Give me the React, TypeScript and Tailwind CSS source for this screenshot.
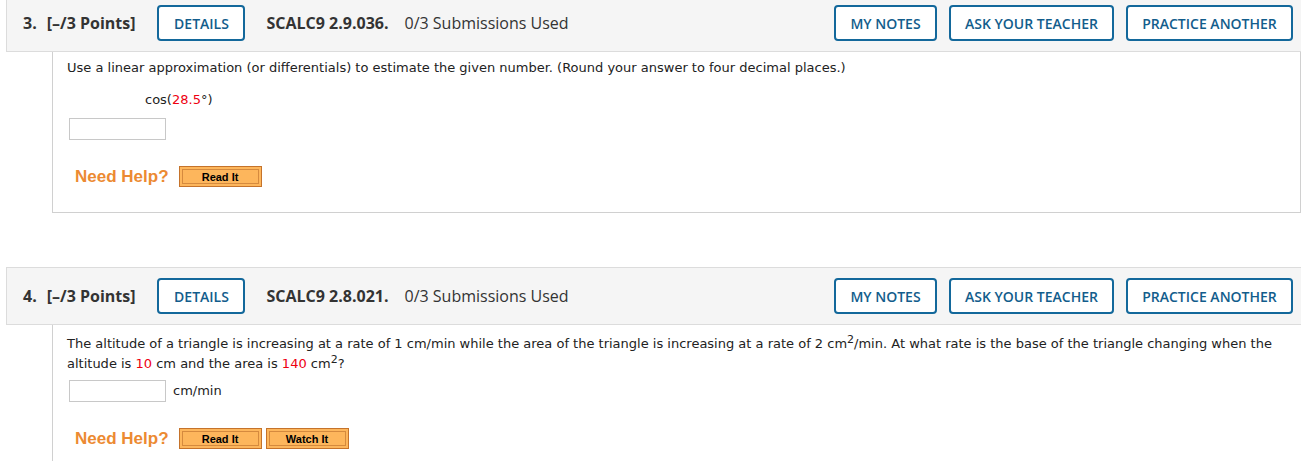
import React from 'react';

const headerFont = { fontFamily: '"Open Sans", "Liberation Sans", sans-serif' };
const bodyFont = { fontFamily: '"DejaVu Sans", Verdana, sans-serif' };

const OutlineButton: React.FC<{ label: string; w: string }> = ({ label, w }) => (
    <button
        className={`h-[36px] ${w} rounded-[4px] border-2 border-[#13689b] bg-white text-[14px] font-semibold text-[#125d8c] flex items-center justify-center`}
    >
        {label}
    </button>
);

const HelpButton: React.FC<{ label: string }> = ({ label }) => (
    <span className="inline-flex h-[21px] w-[83px] items-center justify-center border border-[#c5732b] bg-[#fdb65c] p-[2px]">
        <span
            className="flex h-full w-full items-center justify-center border border-[#d58a3e] text-[11px] font-bold text-black"
            style={{ fontFamily: '"Liberation Sans", Arial, sans-serif' }}
        >
            {label}
        </span>
    </span>
);

const NeedHelp: React.FC<{ buttons: string[] }> = ({ buttons }) => (
    <div className="flex items-center gap-[4px] pl-[22px]">
        <span
            className="mr-[6px] text-[17px] font-bold text-[#ec8a32]"
            style={{ fontFamily: '"Liberation Sans", Arial, sans-serif' }}
        >
            Need Help?
        </span>
        {buttons.map((b) => (
            <HelpButton key={b} label={b} />
        ))}
    </div>
);

const QuestionHeader: React.FC<{ num: string; code: string }> = ({ num, code }) => (
    <div
        className="flex h-[58px] items-center border border-r-0 border-[#dcdcdc] bg-[#f5f5f5] pl-[16px] pr-[8px] text-[#333]"
        style={headerFont}
    >
        <span className="text-[16px] font-bold">{num}</span>
        <span className="ml-[10px] text-[16px] font-bold">[–/3 Points]</span>
        <div className="ml-[22px]">
            <OutlineButton label="DETAILS" w="w-[88px]" />
        </div>
        <span className="ml-[21px] text-[16px] font-bold">{code}</span>
        <span className="ml-[16px] text-[16px]">0/3 Submissions Used</span>
        <div className="ml-auto flex gap-[12px]">
            <OutlineButton label="MY NOTES" w="w-[103px]" />
            <OutlineButton label="ASK YOUR TEACHER" w="w-[165px]" />
            <OutlineButton label="PRACTICE ANOTHER" w="w-[167px]" />
        </div>
    </div>
);

const AnswerBox: React.FC = () => (
    <span className="inline-block h-[22px] w-[97px] border border-[#c8c8c8] bg-white align-middle" />
);

const App: React.FC = () => {
    return (
        <div className="-mt-[6px] w-[1301px] bg-white pl-[6px] text-[#222]">
            {/* Question 3 */}
            <QuestionHeader num="3." code="SCALC9 2.9.036." />
            <div className="ml-[46px] h-[161px] border-b border-l border-r border-[#d0d0d0] pt-[7px]" style={bodyFont}>
                <p className="pl-[14px] text-[13px] leading-[18px]">
                    Use a linear approximation (or differentials) to estimate the given number. (Round your answer to four decimal places.)
                </p>
                <p className="mt-[14px] pl-[92px] text-[13px] leading-[18px]">
                    cos(<span className="text-[#ee0011]">28.5</span>°)
                </p>
                <div className="mt-[7px] pl-[16px]">
                    <AnswerBox />
                </div>
                <div className="mt-[24px]">
                    <NeedHelp buttons={['Read It']} />
                </div>
            </div>

            <div className="h-[54px]" />

            {/* Question 4 */}
            <QuestionHeader num="4." code="SCALC9 2.8.021." />
            <div className="ml-[46px] border-l border-[#d0d0d0] pt-[9px] pb-[12px]" style={bodyFont}>
                <p className="pl-[14px] pr-[10px] text-[13px] leading-[20px]">
                    The altitude of a triangle is increasing at a rate of 1 cm/min while the area of the triangle is increasing at a rate of 2 cm
                    <sup className="text-[11px] leading-none">2</sup>/min. At what rate is the base of the triangle changing when the altitude is{' '}
                    <span className="text-[#ee0011]">10</span> cm and the area is <span className="text-[#ee0011]">140</span> cm
                    <sup className="text-[11px] leading-none">2</sup>?
                </p>
                <div className="mt-[6px] flex items-center gap-[7px] pl-[16px] text-[13px]">
                    <AnswerBox />
                    <span>cm/min</span>
                </div>
                <div className="mt-[24px]">
                    <NeedHelp buttons={['Read It', 'Watch It']} />
                </div>
            </div>
        </div>
    );
};

export default App;
